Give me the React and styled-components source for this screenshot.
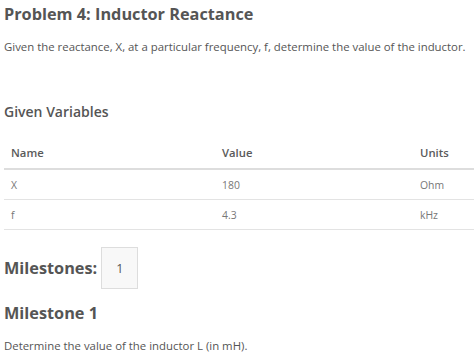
import React from 'react';
import styled, { createGlobalStyle } from 'styled-components';

const GlobalStyle = createGlobalStyle`
  body {
    margin: 0;
    background: #fff;
    font-family: "Open Sans", "Liberation Sans", sans-serif;
    color: #555;
  }
`;

const Page = styled.div`
  padding: 0 0 0 4px;
  width: 470px;
`;

const Title = styled.h1`
  margin: 0;
  padding-top: 3px;
  font-size: 16.3px;
  line-height: 22px;
  font-weight: 700;
  color: #555;
`;

const Text = styled.p`
  margin: ${props => props.$top || 0}px 0 0;
  font-size: 11.4px;
  line-height: 16px;
  color: #555;
`;

const Subtitle = styled.h2`
  margin: 47px 0 0;
  font-size: 14px;
  line-height: 20px;
  font-weight: 600;
  color: #555;
`;

const Table = styled.table`
  margin-top: 15px;
  width: 100%;
  border-collapse: collapse;
  table-layout: fixed;
`;

const HeadCell = styled.th`
  box-sizing: border-box;
  text-align: left;
  font-size: 11.3px;
  font-weight: 600;
  color: #5a5a5a;
  height: 32px;
  padding: 0 0 0 7px;
  border-bottom: 2px solid #ddd;
  width: ${props => props.$width || 'auto'};
`;

const Cell = styled.td`
  font-size: 10.4px;
  color: #777;
  height: 29px;
  padding: 0 0 0 7px;
  border-bottom: 1px solid #e3e3e3;
`;

const MilestoneBar = styled.div`
  display: flex;
  align-items: center;
  gap: 4px;
  margin-top: 17px;
`;

const BarLabel = styled.span`
  font-size: 16.3px;
  font-weight: 700;
  color: #555;
`;

const MilestoneButton = styled.div`
  box-sizing: border-box;
  width: 37px;
  height: 42px;
  display: flex;
  align-items: center;
  justify-content: center;
  background: #f8f8f8;
  border: 1px solid #ddd;
  font-size: 12.5px;
  color: #555;
`;

const MilestoneTitle = styled.h3`
  margin: 13px 0 0;
  font-size: 16.3px;
  line-height: 22px;
  font-weight: 700;
  color: #555;
`;

const variables = [
  { name: 'X', value: '180', units: 'Ohm' },
  { name: 'f', value: '4.3', units: 'kHz' },
];

export default function App() {
  return (
    <Page>
      <GlobalStyle />
      <Title>Problem 4: Inductor Reactance</Title>
      <Text $top={14}>
        Given the reactance, X, at a particular frequency, f, determine the value of the inductor.
      </Text>
      <Subtitle>Given Variables</Subtitle>
      <Table>
        <thead>
          <tr>
            <HeadCell $width="211px">Name</HeadCell>
            <HeadCell $width="198px">Value</HeadCell>
            <HeadCell>Units</HeadCell>
          </tr>
        </thead>
        <tbody>
          {variables.map(v => (
            <tr key={v.name}>
              <Cell>{v.name}</Cell>
              <Cell>{v.value}</Cell>
              <Cell>{v.units}</Cell>
            </tr>
          ))}
        </tbody>
      </Table>
      <MilestoneBar>
        <BarLabel>Milestones:</BarLabel>
        <MilestoneButton>1</MilestoneButton>
      </MilestoneBar>
      <MilestoneTitle>Milestone 1</MilestoneTitle>
      <Text $top={14}>Determine the value of the inductor L (in mH).</Text>
    </Page>
  );
}
